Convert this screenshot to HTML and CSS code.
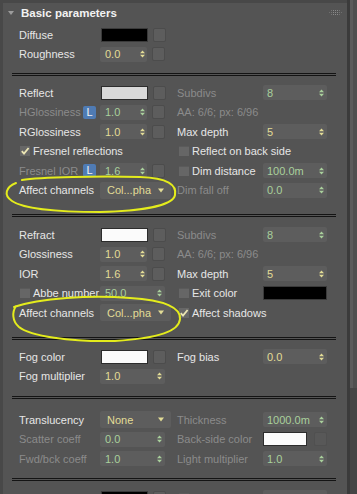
FILE: index.html
```html
<!DOCTYPE html>
<html>
<head>
<meta charset="utf-8">
<link rel="stylesheet" href="styles.css">
</head>
<body>
<div class="app">
  <div class="panel">
    <div class="head">
      <span class="tri"></span>
      <span class="title">Basic parameters</span>
      <svg class="grip" width="14" height="7" viewBox="0 0 14 7">
        <g fill="#8a8a8a">
          <rect x="0" y="3" width="1" height="1" opacity=".5"/>
          <rect x="2" y="1" width="1" height="1" opacity=".6"/><rect x="2" y="3" width="1" height="1" opacity=".6"/><rect x="2" y="5" width="1" height="1" opacity=".6"/>
          <rect x="4" y="1" width="1" height="1"/><rect x="4" y="3" width="1" height="1"/><rect x="4" y="5" width="1" height="1"/>
          <rect x="6" y="1" width="1" height="1"/><rect x="6" y="3" width="1" height="1"/><rect x="6" y="5" width="1" height="1"/>
          <rect x="8" y="1" width="1" height="1"/><rect x="8" y="3" width="1" height="1"/><rect x="8" y="5" width="1" height="1"/>
          <rect x="10" y="1" width="1" height="1" opacity=".6"/><rect x="10" y="3" width="1" height="1" opacity=".6"/><rect x="10" y="5" width="1" height="1" opacity=".6"/>
          <rect x="12" y="3" width="1" height="1" opacity=".5"/>
        </g>
      </svg>
    </div>

    <div class="sec s1">
      <div class="row">
        <span class="lbl">Diffuse</span>
        <div class="ctl"><span class="sw black"></span><span class="btn"></span></div>
      </div>
      <div class="row">
        <span class="lbl">Roughness</span>
        <div class="ctl"><span class="spin y">0.0<svg class="arr" viewBox="0 0 5 8"><path d="M0 3.3L2.5 0.6L5 3.3ZM0 4.7L2.5 7.4L5 4.7Z"/></svg></span><span class="btn"></span></div>
      </div>
    </div>
    <div class="sep"></div>

    <div class="sec s2">
      <div class="row">
        <span class="lbl">Reflect</span>
        <div class="ctl"><span class="sw lgray"></span><span class="btn"></span></div>
        <span class="rlbl dis">Subdivs</span>
        <span class="spin r g">8<svg class="arr" viewBox="0 0 5 8"><path d="M0 3.3L2.5 0.6L5 3.3ZM0 4.7L2.5 7.4L5 4.7Z"/></svg></span>
      </div>
      <div class="row">
        <span class="lbl dis lb">HGlossiness<span class="lbtn">L</span></span>
        <div class="ctl"><span class="spin g">1.0<svg class="arr" viewBox="0 0 5 8"><path d="M0 3.3L2.5 0.6L5 3.3ZM0 4.7L2.5 7.4L5 4.7Z"/></svg></span><span class="btn"></span></div>
        <span class="spanr dis">AA: 6/6; px: 6/96</span>
      </div>
      <div class="row">
        <span class="lbl">RGlossiness</span>
        <div class="ctl"><span class="spin y">1.0<svg class="arr" viewBox="0 0 5 8"><path d="M0 3.3L2.5 0.6L5 3.3ZM0 4.7L2.5 7.4L5 4.7Z"/></svg></span><span class="btn"></span></div>
        <span class="rlbl">Max depth</span>
        <span class="spin r y">5<svg class="arr" viewBox="0 0 5 8"><path d="M0 3.3L2.5 0.6L5 3.3ZM0 4.7L2.5 7.4L5 4.7Z"/></svg></span>
      </div>
      <div class="row">
        <span class="spanl chk"><span class="cb on"><svg viewBox="0 0 10 10"><path d="M1.8 5.2L4 7.6L8.6 2"/></svg></span>Fresnel reflections</span>
        <span class="spanr chk"><span class="cb"></span>Reflect on back side</span>
      </div>
      <div class="row">
        <span class="lbl dis lb">Fresnel IOR<span class="lbtn">L</span></span>
        <div class="ctl"><span class="spin g">1.6<svg class="arr" viewBox="0 0 5 8"><path d="M0 3.3L2.5 0.6L5 3.3ZM0 4.7L2.5 7.4L5 4.7Z"/></svg></span><span class="btn"></span></div>
        <span class="rlbl chk"><span class="cb"></span>Dim distance</span>
        <span class="spin r g">100.0m<svg class="arr" viewBox="0 0 5 8"><path d="M0 3.3L2.5 0.6L5 3.3ZM0 4.7L2.5 7.4L5 4.7Z"/></svg></span>
      </div>
      <div class="row">
        <span class="lbl">Affect channels</span>
        <div class="ctl"><span class="dd">Col...pha<svg class="ddarr" viewBox="0 0 6 5"><path d="M0 0.5H6L3 4.5Z"/></svg></span></div>
        <span class="rlbl dis">Dim fall off</span>
        <span class="spin r g">0.0<svg class="arr" viewBox="0 0 5 8"><path d="M0 3.3L2.5 0.6L5 3.3ZM0 4.7L2.5 7.4L5 4.7Z"/></svg></span>
      </div>
    </div>
    <div class="sep"></div>

    <div class="sec s3">
      <div class="row">
        <span class="lbl">Refract</span>
        <div class="ctl"><span class="sw white"></span><span class="btn"></span></div>
        <span class="rlbl dis">Subdivs</span>
        <span class="spin r g">8<svg class="arr" viewBox="0 0 5 8"><path d="M0 3.3L2.5 0.6L5 3.3ZM0 4.7L2.5 7.4L5 4.7Z"/></svg></span>
      </div>
      <div class="row">
        <span class="lbl">Glossiness</span>
        <div class="ctl"><span class="spin y">1.0<svg class="arr" viewBox="0 0 5 8"><path d="M0 3.3L2.5 0.6L5 3.3ZM0 4.7L2.5 7.4L5 4.7Z"/></svg></span><span class="btn"></span></div>
        <span class="spanr dis">AA: 6/6; px: 6/96</span>
      </div>
      <div class="row">
        <span class="lbl">IOR</span>
        <div class="ctl"><span class="spin y">1.6<svg class="arr" viewBox="0 0 5 8"><path d="M0 3.3L2.5 0.6L5 3.3ZM0 4.7L2.5 7.4L5 4.7Z"/></svg></span><span class="btn"></span></div>
        <span class="rlbl">Max depth</span>
        <span class="spin r y">5<svg class="arr" viewBox="0 0 5 8"><path d="M0 3.3L2.5 0.6L5 3.3ZM0 4.7L2.5 7.4L5 4.7Z"/></svg></span>
      </div>
      <div class="row">
        <span class="lbl chk"><span class="cb"></span>Abbe number</span>
        <div class="ctl"><span class="spin w g">50.0<svg class="arr" viewBox="0 0 5 8"><path d="M0 3.3L2.5 0.6L5 3.3ZM0 4.7L2.5 7.4L5 4.7Z"/></svg></span></div>
        <span class="rlbl chk"><span class="cb"></span>Exit color</span>
        <span class="sw black r"></span>
      </div>
      <div class="row">
        <span class="lbl">Affect channels</span>
        <div class="ctl"><span class="dd">Col...pha<svg class="ddarr" viewBox="0 0 6 5"><path d="M0 0.5H6L3 4.5Z"/></svg></span></div>
        <span class="spanr chk"><span class="cb on"><svg viewBox="0 0 10 10"><path d="M1.8 5.2L4 7.6L8.6 2"/></svg></span>Affect shadows</span>
      </div>
    </div>
    <div class="sep"></div>

    <div class="sec s4">
      <div class="row">
        <span class="lbl">Fog color</span>
        <div class="ctl"><span class="sw white"></span><span class="btn"></span></div>
        <span class="rlbl">Fog bias</span>
        <span class="spin r y">0.0<svg class="arr" viewBox="0 0 5 8"><path d="M0 3.3L2.5 0.6L5 3.3ZM0 4.7L2.5 7.4L5 4.7Z"/></svg></span>
      </div>
      <div class="row">
        <span class="lbl">Fog multiplier</span>
        <div class="ctl"><span class="spin w y">1.0<svg class="arr" viewBox="0 0 5 8"><path d="M0 3.3L2.5 0.6L5 3.3ZM0 4.7L2.5 7.4L5 4.7Z"/></svg></span></div>
      </div>
    </div>
    <div class="sep"></div>

    <div class="sec s5">
      <div class="row">
        <span class="lbl">Translucency</span>
        <div class="ctl"><span class="dd">None<svg class="ddarr" viewBox="0 0 6 5"><path d="M0 0.5H6L3 4.5Z"/></svg></span></div>
        <span class="rlbl dis">Thickness</span>
        <span class="spin r g">1000.0m<svg class="arr" viewBox="0 0 5 8"><path d="M0 3.3L2.5 0.6L5 3.3ZM0 4.7L2.5 7.4L5 4.7Z"/></svg></span>
      </div>
      <div class="row">
        <span class="lbl dis">Scatter coeff</span>
        <div class="ctl"><span class="spin w g">0.0<svg class="arr" viewBox="0 0 5 8"><path d="M0 3.3L2.5 0.6L5 3.3ZM0 4.7L2.5 7.4L5 4.7Z"/></svg></span></div>
        <span class="rlbl dis">Back-side color</span>
        <div class="rctl"><span class="sw white sm"></span><span class="btn off"></span></div>
      </div>
      <div class="row">
        <span class="lbl dis">Fwd/bck coeff</span>
        <div class="ctl"><span class="spin w g">1.0<svg class="arr" viewBox="0 0 5 8"><path d="M0 3.3L2.5 0.6L5 3.3ZM0 4.7L2.5 7.4L5 4.7Z"/></svg></span></div>
        <span class="rlbl dis">Light multiplier</span>
        <span class="spin r g">1.0<svg class="arr" viewBox="0 0 5 8"><path d="M0 3.3L2.5 0.6L5 3.3ZM0 4.7L2.5 7.4L5 4.7Z"/></svg></span>
      </div>
    </div>
    <div class="sep"></div>

    <div class="sec s6">
      <div class="row">
        <span class="lbl">Self-illumination</span>
        <div class="ctl"><span class="sw black"></span><span class="btn"></span></div>
        <span class="rlbl chk gi"><span class="cb"></span><span class="mult">Mult</span></span>
        <span class="spin r y">1.0<svg class="arr" viewBox="0 0 5 8"><path d="M0 3.3L2.5 0.6L5 3.3ZM0 4.7L2.5 7.4L5 4.7Z"/></svg></span>
      </div>
    </div>

    <svg class="marks" width="347" height="494" viewBox="0 0 347 494">
      <path d="M22 180 C 40 177, 100 176, 140 177 C 168 178, 177 185, 175 195 C 173 206, 140 211, 100 212 C 55 212, 22 208, 12 201 C 3 195, 6 187, 16 183"/>
      <path d="M14 307 C 40 298, 90 295, 130 298 C 165 300, 181 308, 180 319 C 179 331, 160 338, 115 341 C 70 342, 30 336, 19 327 C 12 321, 12 312, 16 306"/>
    </svg>
  </div>
  <div class="scroll"><div class="thumb"></div></div>
</div>
</body>
</html>
```

FILE: styles.css
```css
html, body {
  margin: 0;
  padding: 0;
  background: #535353;
}
body {
  font-family: "Liberation Sans", Arial, sans-serif;
  font-size: 11px;
  color: #e6e6e6;
  width: 357px;
  height: 494px;
  overflow: hidden;
}
.app {
  display: flex;
  height: 494px;
}
.panel {
  position: relative;
  width: 347px;
  height: 494px;
  overflow: hidden;
  background: #545454;
  box-shadow: inset 3px 3px 0 #484848;
}
.head {
  margin-top: 3px;
  height: 21px;
  display: flex;
  align-items: center;
  padding-left: 8px;
}
.tri {
  width: 0;
  height: 0;
  border-left: 3px solid transparent;
  border-right: 3px solid transparent;
  border-top: 4px solid #9c9c9c;
  margin-right: 7px;
  margin-top: -2px;
}
.title {
  font-weight: bold;
  font-size: 11.5px;
  color: #f2f2f2;
  margin-top: -2px;
}
.grip {
  margin-left: auto;
  margin-right: 4px;
  margin-top: -3px;
}
.sec {
  padding-left: 19px;
}
.s1 { padding-top: 1px; padding-bottom: 9px; }
.s2 { padding-top: 7px; padding-bottom: 14px; }
.s3 { padding-top: 8px; padding-bottom: 14.5px; }
.s4 { padding-top: 7px; padding-bottom: 10px; }
.s5 { padding-top: 11px; padding-bottom: 9.5px; }
.s6 { padding-top: 7px; }
.sep {
  height: 1px;
  border-top: 1px solid #141414;
  border-bottom: 1px solid #141414;
  margin: 0 11px 0 12px;
}
.row {
  display: grid;
  grid-template-columns: 81px 71px 6px 86px 64px;
  height: 19.5px;
  align-items: center;
  white-space: nowrap;
}
.lbl { grid-column: 1; }
.ctl {
  grid-column: 2;
  display: flex;
  align-items: center;
  gap: 5px;
}
.rlbl { grid-column: 4; }
.r, .rctl { grid-column: 5; }
.rctl {
  display: flex;
  align-items: center;
  gap: 7px;
}
.spanl { grid-column: 1 / 3; }
.spanr { grid-column: 4 / 6; }
.dis { color: #8b8b8b; }
.lb {
  display: flex;
  align-items: center;
  justify-content: space-between;
  padding-right: 4px;
}
.lbtn {
  width: 13px;
  height: 13px;
  border-radius: 2px;
  background: #4f7bb4;
  color: #f4f4f4;
  font-size: 11px;
  line-height: 13px;
  text-align: center;
}
.sw {
  display: block;
  width: 47px;
  height: 14px;
  box-sizing: border-box;
  border: 1px solid #2c2c2c;
  margin-left: 1px;
}
.sw.r { width: 64px; margin-left: 0; }
.sw.sm { width: 44px; margin-left: 0; }
.black { background: #000; border-color: #3a3a3a; }
.lgray { background: #d9d9d9; }
.white { background: #fbfbfb; }
.btn {
  display: block;
  width: 13px;
  height: 14px;
  box-sizing: border-box;
  background: #5d5d5d;
  border: 1px solid #4c4c4c;
  border-radius: 2px;
}
.btn.off { background: #585858; border-color: #505050; }
.spin {
  display: flex;
  align-items: center;
  justify-content: space-between;
  width: 47px;
  height: 15px;
  box-sizing: border-box;
  padding: 0 2px 0 5px;
  background: #5d5d5d;
  border-radius: 2px;
}
.spin.w { width: 65px; padding-right: 3px; }
.spin.r { width: 64px; padding-left: 4px; padding-right: 3px; }
.arr {
  width: 5px;
  height: 8px;
  fill: currentColor;
}
.y { color: #e2dc96; }
.g { color: #a9d09c; }
.dd {
  display: flex;
  align-items: center;
  justify-content: space-between;
  width: 71px;
  height: 17px;
  box-sizing: border-box;
  padding: 0 7px 0 7px;
  background: #5d5d5d;
  border-radius: 2px;
  color: #e2dc96;
}
.ddarr {
  width: 6px;
  height: 5px;
  fill: #e2dc96;
}
.chk {
  display: flex;
  align-items: center;
}
.cb {
  width: 10px;
  height: 10px;
  background: #666;
  margin-right: 3px;
  margin-left: 1px;
  box-sizing: border-box;
  border-top: 1px solid #5a5a5a;
}
.rlbl .cb, .spanr .cb { margin-left: 2px; margin-right: 3px; }
.cb.on {
  background: #676767;
  border: none;
}
.cb.on svg {
  display: block;
  width: 10px;
  height: 10px;
  fill: none;
  stroke: #ece6b4;
  stroke-width: 1.8;
}
.gi .mult { margin-left: auto; margin-right: 8px; }
.marks {
  position: absolute;
  left: 0;
  top: 0;
  pointer-events: none;
}
.marks path {
  fill: none;
  stroke: #e4ec1c;
  stroke-width: 2;
  stroke-linecap: round;
}
.scroll {
  width: 7px;
  height: 494px;
  border-left: 3px solid #3b3b3b;
  background: #454545;
}
.thumb {
  height: 388px;
  background: linear-gradient(to right, #5b5b5b 3px, #4f4f4f 3px);
}
```
